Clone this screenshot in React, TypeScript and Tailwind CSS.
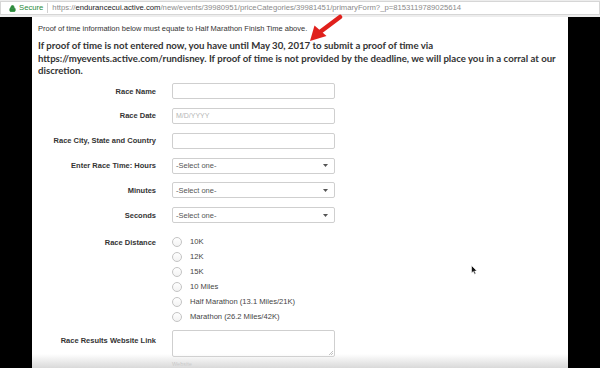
import { Lock } from 'lucide-react';

const sans = "font-['Liberation_Sans',Arial,sans-serif]";

function AddressBar() {
  return (
    <div className="h-[17px] shrink-0 bg-[#ededed] pt-[1px]">
      <div className="flex h-[14px] items-center border border-[#d6d6d6] bg-white pl-[8px] text-[7.7px] leading-none">
        <Lock size={7} strokeWidth={3} className="text-[#2e8b3e]" fill="#2e8b3e" />
        <span className={`${sans} ml-[3px] text-[#2a8a3a]`}>Secure</span>
        <span className="mx-[4px] h-[10px] w-px bg-[#d0d0d0]" />
        <span className={`${sans} whitespace-nowrap text-[#8a8a8a]`}>
          https://
          <span className="text-[#222]">endurancecui.active.com</span>
          /new/events/39980951/priceCategories/39981451/primaryForm?_p=8153119789025614
        </span>
      </div>
    </div>
  );
}

function Label({ children }: { children: React.ReactNode }) {
  return (
    <div className={`${sans} w-[118px] shrink-0 text-right text-[7.5px] font-bold text-[#333]`}>
      {children}
    </div>
  );
}

function TextRow({ label, placeholder }: { label: string; placeholder?: string }) {
  return (
    <div className="flex h-[24.8px] items-center gap-[16px]">
      <Label>{label}</Label>
      <div className="flex h-[16px] w-[163px] items-center rounded-[2px] border border-[#cfcfcf] bg-white px-[3px]">
        {placeholder && (
          <span className={`${sans} text-[7px] text-[#b5b5b5]`}>{placeholder}</span>
        )}
      </div>
    </div>
  );
}

function SelectRow({ label }: { label: string }) {
  return (
    <div className="flex h-[24.8px] items-center gap-[16px]">
      <Label>{label}</Label>
      <div className="flex h-[16px] w-[163px] items-center justify-between rounded-[2px] border border-[#cfcfcf] bg-white pl-[3px] pr-[6px]">
        <span className={`${sans} text-[7.5px] text-[#555]`}>-Select one-</span>
        <svg width="5" height="3" viewBox="0 0 5 3">
          <path d="M0 0h5L2.5 3z" fill="#555" />
        </svg>
      </div>
    </div>
  );
}

const distances = [
  '10K',
  '12K',
  '15K',
  '10 Miles',
  'Half Marathon (13.1 Miles/21K)',
  'Marathon (26.2 Miles/42K)',
];

export default function App() {
  return (
    <div className="relative flex h-[368px] w-[600px] flex-col overflow-hidden bg-black">
      <AddressBar />
      <div className="flex flex-1">
        <div className="w-[32px] shrink-0 bg-black" />
        <main className="w-[536px] shrink-0 bg-white pl-[6px] pt-[7px]">
          <p className={`${sans} text-[7.5px] leading-[10px] text-[#333]`}>
            Proof of time information below must equate to Half Marathon Finish Time above.
          </p>
          <p className="mt-[5px] whitespace-nowrap font-['Lato',sans-serif] text-[9.65px] font-bold leading-[12.5px] text-[#333]">
            If proof of time is not entered now, you have until May 30, 2017 to submit a proof of time via
            <br />
            https://myevents.active.com/rundisney. If proof of time is not provided by the deadline, we will place you in a corral at our
            <br />
            discretion.
          </p>

          <div className="mt-[2.4px] flex flex-col">
            <TextRow label="Race Name" />
            <TextRow label="Race Date" placeholder="M/D/YYYY" />
            <TextRow label="Race City, State and Country" />
            <SelectRow label="Enter Race Time: Hours" />
            <SelectRow label="Minutes" />
            <SelectRow label="Seconds" />

            <div className="mt-[7px] flex gap-[16px]">
              <div className="flex h-[15px] items-center">
                <Label>Race Distance</Label>
              </div>
              <div className="flex flex-col">
                {distances.map((d) => (
                  <div key={d} className="flex h-[15px] items-center gap-[8px]">
                    <span className="h-[10px] w-[10px] rounded-full border border-[#c4c4c4] bg-gradient-to-b from-white to-[#f3f3f3]" />
                    <span className={`${sans} text-[7.6px] text-[#444]`}>{d}</span>
                  </div>
                ))}
              </div>
            </div>

            <div className="mt-[5.5px] flex gap-[16px]">
              <div className="pt-[5px]">
                <Label>Race Results Website Link</Label>
              </div>
              <div className="flex flex-col">
                <div className="relative h-[27px] w-[163px] rounded-[2px] border border-[#cfcfcf] bg-white">
                  <svg className="absolute bottom-[1px] right-[1px]" width="4" height="4" viewBox="0 0 4 4">
                    <path d="M4 0L0 4M4 2L2 4" stroke="#999" strokeWidth="0.6" />
                  </svg>
                </div>
                <span className={`${sans} mt-[3px] text-[5.5px] text-[#999]`}>Website</span>
              </div>
            </div>
          </div>
        </main>
        <div className="flex-1 bg-black" />
      </div>

      {/* red annotation arrow */}
      <svg className="absolute left-[300px] top-[14px]" width="45" height="32" viewBox="0 0 45 32">
        <path d="M40 3 L20 18" stroke="#e0201c" strokeWidth="4.5" strokeLinecap="round" />
        <path d="M10 27 L14.5 11.5 L26.5 22 Z" fill="#e0201c" />
      </svg>

      {/* bottom fade */}
      <div className="pointer-events-none absolute bottom-0 left-[32px] h-[14px] w-[536px] bg-gradient-to-b from-white/0 to-[#d9d9d9]" />

      {/* mouse cursor */}
      <svg className="absolute left-[471px] top-[265px]" width="7" height="10" viewBox="0 0 7 10">
        <path d="M0.5 0.5 L0.5 8 L2.3 6.4 L3.6 9.3 L4.8 8.8 L3.6 6 L6 6 Z" fill="#111" stroke="#fff" strokeWidth="0.6" />
      </svg>
    </div>
  );
}
